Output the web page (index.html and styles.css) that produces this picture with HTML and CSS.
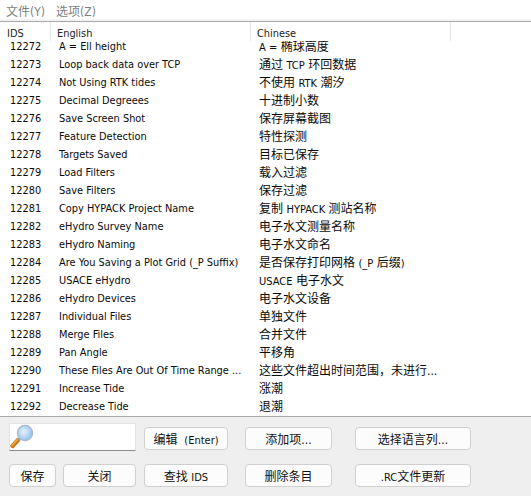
FILE: index.html
```html
<!DOCTYPE html>
<html lang="zh">
<head>
<meta charset="utf-8">
<title>Language Editor</title>
<link rel="stylesheet" href="styles.css">
</head>
<body>
<div class="app">
  <nav class="menu"><span>文件(Y)</span><span>选项(Z)</span></nav>
  <div class="header">
    <div class="hcell c1">IDS</div>
    <div class="hcell c2">English</div>
    <div class="hcell c3">Chinese</div>
    <div class="hcell c4"></div>
  </div>
  <div class="list">
    <div class="rows">
      <div class="row"><span class="id">12272</span><span class="en">A = Ell height</span><span class="zh"><span class="lat">A =</span> 椭球高度</span></div>
      <div class="row"><span class="id">12273</span><span class="en">Loop back data over TCP</span><span class="zh">通过 <span class="lat">TCP</span> 环回数据</span></div>
      <div class="row"><span class="id">12274</span><span class="en">Not Using RTK tides</span><span class="zh">不使用 <span class="lat">RTK</span> 潮汐</span></div>
      <div class="row"><span class="id">12275</span><span class="en">Decimal Degreees</span><span class="zh">十进制小数</span></div>
      <div class="row"><span class="id">12276</span><span class="en">Save Screen Shot</span><span class="zh">保存屏幕截图</span></div>
      <div class="row"><span class="id">12277</span><span class="en">Feature Detection</span><span class="zh">特性探测</span></div>
      <div class="row"><span class="id">12278</span><span class="en">Targets Saved</span><span class="zh">目标已保存</span></div>
      <div class="row"><span class="id">12279</span><span class="en">Load Filters</span><span class="zh">载入过滤</span></div>
      <div class="row"><span class="id">12280</span><span class="en">Save Filters</span><span class="zh">保存过滤</span></div>
      <div class="row"><span class="id">12281</span><span class="en">Copy HYPACK Project Name</span><span class="zh">复制 <span class="lat">HYPACK</span> 测站名称</span></div>
      <div class="row"><span class="id">12282</span><span class="en">eHydro Survey Name</span><span class="zh">电子水文测量名称</span></div>
      <div class="row"><span class="id">12283</span><span class="en">eHydro Naming</span><span class="zh">电子水文命名</span></div>
      <div class="row"><span class="id">12284</span><span class="en">Are You Saving a Plot Grid (_P Suffix)</span><span class="zh">是否保存打印网格 <span class="lat">(_P</span> 后缀<span class="lat">)</span></span></div>
      <div class="row"><span class="id">12285</span><span class="en">USACE eHydro</span><span class="zh"><span class="lat">USACE</span> 电子水文</span></div>
      <div class="row"><span class="id">12286</span><span class="en">eHydro Devices</span><span class="zh">电子水文设备</span></div>
      <div class="row"><span class="id">12287</span><span class="en">Individual Files</span><span class="zh">单独文件</span></div>
      <div class="row"><span class="id">12288</span><span class="en">Merge Files</span><span class="zh">合并文件</span></div>
      <div class="row"><span class="id">12289</span><span class="en">Pan Angle</span><span class="zh">平移角</span></div>
      <div class="row"><span class="id">12290</span><span class="en">These Files Are Out Of Time Range ...</span><span class="zh">这些文件超出时间范围，未进行...</span></div>
      <div class="row"><span class="id">12291</span><span class="en">Increase Tide</span><span class="zh">涨潮</span></div>
      <div class="row"><span class="id">12292</span><span class="en">Decrease Tide</span><span class="zh">退潮</span></div>
    </div>
  </div>
  <div class="panel">
    <div class="top-line">
      <div class="search">
        <svg class="lens" width="26" height="26" viewBox="0 0 26 26" aria-hidden="true">
          <defs>
            <radialGradient id="glass" cx="0.42" cy="0.42" r="0.6">
              <stop offset="0" stop-color="#e6f3fd"/>
              <stop offset="1" stop-color="#8fc0ea"/>
            </radialGradient>
          </defs>
          <path d="M2.5 22 L8 16" stroke="#c9781e" stroke-width="4.4" stroke-linecap="round"/>
          <path d="M2 21.5 L7.5 15.5" stroke="#f5a63c" stroke-width="1.8" stroke-linecap="round"/>
          <path d="M8 16 L10 14" stroke="#9a9a9a" stroke-width="2.6"/>
          <circle cx="15" cy="9" r="7.6" fill="url(#glass)" stroke="#a8b8d0" stroke-width="1.3"/>
        </svg>
      </div>
      <button class="btn b-edit">编辑&nbsp; <span class="lat">(Enter)</span></button>
      <button class="btn b-add">添加项...</button>
      <button class="btn b-wide">选择语言列...</button>
    </div>
    <div class="bottom-line">
      <button class="btn b-save">保存</button>
      <button class="btn b-close">关闭</button>
      <button class="btn b-edit">查找 <span class="lat">IDS</span></button>
      <button class="btn b-add">删除条目</button>
      <button class="btn b-wide"><span class="lat">.RC</span>文件更新</button>
    </div>
  </div>
</div>
</body>
</html>
```
FILE: styles.css
```css
* { box-sizing: border-box; }
html, body { margin: 0; padding: 0; background: #fff; }
body {
  font-family: "DejaVu Sans Condensed", "DejaVu Sans", "Noto Sans CJK SC", sans-serif;
  font-size: 10.9px;
  font-stretch: condensed;
  color: #0a0a0a;
}
.app {
  width: 531px;
  height: 496px;
  display: flex;
  flex-direction: column;
  overflow: hidden;
}
.menu {
  height: 22px;
  flex: none;
  display: flex;
  gap: 11px;
  padding-left: 6px;
  align-items: center;
  color: #808080;
  font-size: 12px;
  background: #fff;
  border-bottom: 1px solid #a9a9a9;
  box-shadow: inset 0 -2px 0 #f2f2f2;
}
.header {
  flex: none;
  height: 15px;
  display: flex;
  background: #fff;
  position: relative;
  z-index: 1;
}
.hcell {
  height: 19px;
  padding-top: 5px;
  line-height: 13px;
  border-right: 1px solid #e5e5e5;
  color: #222;
  background: #fff;
}
.c1 { width: 51px; padding-left: 7px; }
.c2 { width: 200px; padding-left: 6px; }
.c3 { width: 200px; padding-left: 6px; }
.c4 { width: 80px; border-right: 0; }
.list {
  flex: 1;
  min-height: 0;
  overflow: hidden;
  background: #fff;
}
.row {
  height: 18px;
  padding-top: 2px;
  display: flex;
  align-items: center;
  white-space: nowrap;
}
.row span { line-height: 14px; }
.id { width: 59px; padding-left: 10px; flex: none; }
.en { width: 200px; flex: none; }
.zh { flex: 1; font-size: 12px; }
.lat { font-size: 11px; }
.panel {
  flex: none;
  height: 80px;
  background: #efefef;
  border-top: 1px solid #a9a9a9;
  padding: 6px 0 0 9px;
}
.top-line {
  display: flex;
  align-items: flex-start;
}
.bottom-line {
  display: flex;
  margin-top: 13px;
}
.search {
  width: 127px;
  height: 28px;
  background: #fff;
  border-top: 1px solid #e4e4e4;
  border-left: 1px solid #e4e4e4;
  border-right: 1px solid #e4e4e4;
  border-bottom: 1px solid #8a8a8a;
  margin-right: 8px;
}
.lens { display: block; }
.btn {
  height: 23px;
  padding: 0;
  font: inherit;
  font-size: 12px;
  color: #111;
  background: #fcfcfc;
  border: 1px solid #d0d0d0;
  border-radius: 4px;
  white-space: nowrap;
}
.top-line .btn { margin-top: 4px; }
.b-edit { width: 84px; margin-right: 17px; }
.b-add { width: 87px; margin-right: 23px; }
.b-wide { width: 116px; }
.b-save { width: 47px; margin-right: 7px; }
.b-close { width: 73px; margin-right: 8px; }
```
